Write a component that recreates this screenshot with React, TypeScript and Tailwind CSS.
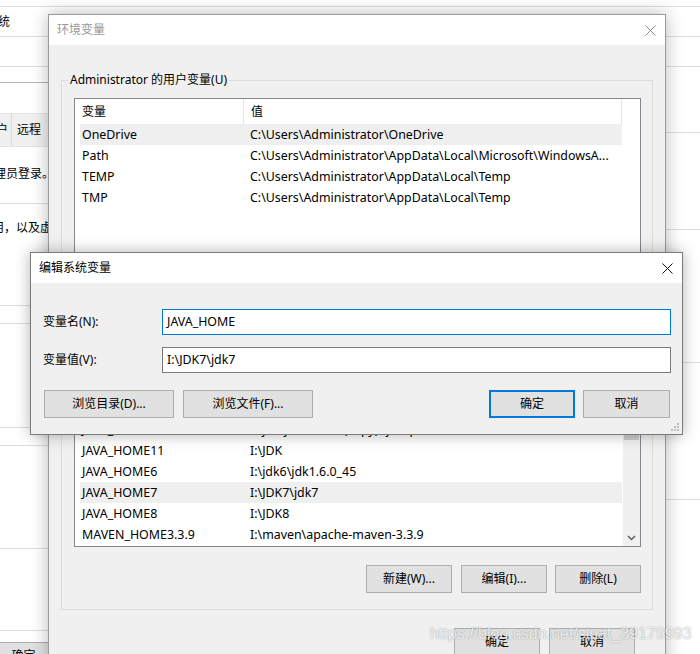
import React from "react";

const userRows: [string, string][] = [
  ["OneDrive", "C:\\Users\\Administrator\\OneDrive"],
  ["Path", "C:\\Users\\Administrator\\AppData\\Local\\Microsoft\\WindowsA..."],
  ["TEMP", "C:\\Users\\Administrator\\AppData\\Local\\Temp"],
  ["TMP", "C:\\Users\\Administrator\\AppData\\Local\\Temp"],
];

const sysRows: [string, string][] = [
  ["ComSpec", "C:\\Windows\\system32\\cmd.exe"],
  ["DriverData", "C:\\Windows\\System32\\Drivers\\DriverData"],
  ["JAVA_HOME", "%JAVA_HOME7%"],
  ["JAVA_HOME10", "I:\\jdk\\jdk-10.0.2 (copy) \\javapath"],
  ["JAVA_HOME11", "I:\\JDK"],
  ["JAVA_HOME6", "I:\\jdk6\\jdk1.6.0_45"],
  ["JAVA_HOME7", "I:\\JDK7\\jdk7"],
  ["JAVA_HOME8", "I:\\JDK8"],
  ["MAVEN_HOME3.3.9", "I:\\maven\\apache-maven-3.3.9"],
];

function CloseX({ dark }: { dark?: boolean }) {
  return (
    <svg width="11" height="11" viewBox="0 0 11 11" className="block">
      <path
        d="M0.5 0.5 L10.5 10.5 M10.5 0.5 L0.5 10.5"
        stroke={dark ? "#111111" : "#8a8a8a"}
        strokeWidth="1"
        fill="none"
      />
    </svg>
  );
}

function Btn({ children, className }: { children: React.ReactNode; className: string }) {
  return (
    <div
      className={`h-[28px] shrink-0 flex items-center justify-center bg-[#e1e1e1] border border-[#adadad] text-[12px] ${className}`}
    >
      {children}
    </div>
  );
}

function DefaultBtn({ children, className }: { children: React.ReactNode; className: string }) {
  return (
    <div
      className={`h-[28px] shrink-0 flex items-center justify-center bg-[#e1e1e1] border-2 border-[#0078d7] text-[12px] ${className}`}
    >
      {children}
    </div>
  );
}

function Scrollbar() {
  return (
    <div className="w-[17px] shrink-0 bg-[#f0f0f0] flex flex-col">
      <div className="h-[17px] flex items-center justify-center">
        <svg width="9" height="6" viewBox="0 0 9 6">
          <path d="M1 5 L4.5 1.5 L8 5" stroke="#606060" strokeWidth="1.5" fill="none" />
        </svg>
      </div>
      <div className="h-[92px] mx-[1px] bg-[#cdcdcd]" />
      <div className="flex-1" />
      <div className="h-[17px] flex items-center justify-center">
        <svg width="9" height="6" viewBox="0 0 9 6">
          <path d="M1 1 L4.5 4.5 L8 1" stroke="#606060" strokeWidth="1.5" fill="none" />
        </svg>
      </div>
    </div>
  );
}

function ListView({
  rows,
  selected,
  heightClass,
  scrollbar,
}: {
  rows: [string, string][];
  selected: number;
  heightClass: string;
  scrollbar?: boolean;
}) {
  return (
    <div className={`flex border border-[#828790] bg-white overflow-hidden ${heightClass}`}>
      <div className="flex-1 flex flex-col overflow-hidden">
        <div className="flex h-[25px] shrink-0">
          <div className="w-[169px] h-full border-r border-[#e5e5e5] pl-[7px] flex items-center">变量</div>
          <div className="w-[378px] h-full border-r border-[#e5e5e5] pl-[7px] flex items-center">值</div>
        </div>
        {rows.map((r, i) => (
          <div
            key={r[0]}
            className={`flex h-[21px] shrink-0 ml-[5px] w-[542px] items-center pt-[2px] text-[12.4px] ${i === selected ? "bg-[#efefef]" : ""}`}
          >
            <div className="w-[168px] pl-[2px] whitespace-nowrap overflow-hidden">{r[0]}</div>
            <div className="flex-1 pl-[2px] whitespace-nowrap overflow-hidden">{r[1]}</div>
          </div>
        ))}
      </div>
      {scrollbar ? <Scrollbar /> : null}
    </div>
  );
}

function EnvDialog() {
  return (
    <div className="absolute left-[48px] top-[14px] w-[618px] h-[660px] border border-[#9a9a9a] bg-[#f0f0f0] shadow-[0_0_16px_rgba(0,0,0,0.28)] flex flex-col">
      <div className="h-[30px] shrink-0 bg-white flex items-center justify-between pl-[8px] pr-[9px]">
        <span className="text-[#999999]">环境变量</span>
        <CloseX />
      </div>
      <div className="flex flex-col">
        <div className="relative mt-[35px] mx-[12px] h-[221px] border border-[#dcdcdc] pt-[17px] pl-[12px] pr-[11px]">
          <span className="absolute left-[6px] top-[-9px] bg-[#f0f0f0] px-[2px] leading-[16px] whitespace-nowrap">
            Administrator 的用户变量(U)
          </span>
          <ListView rows={userRows} selected={0} heightClass="h-[170px]" />
        </div>
        <div className="relative mt-[11px] mx-[12px] h-[298px] border border-[#dcdcdc] pt-[17px] pl-[12px] pr-[11px] flex flex-col">
          <span className="absolute left-[6px] top-[-9px] bg-[#f0f0f0] px-[2px] leading-[16px] whitespace-nowrap">
            系统变量(S)
          </span>
          <ListView rows={sysRows} selected={6} heightClass="h-[217px]" scrollbar />
          <div className="flex justify-end mt-[18px]">
            <Btn className="w-[86px]">新建(W)...</Btn>
            <Btn className="w-[86px] ml-[9px]">编辑(I)...</Btn>
            <Btn className="w-[86px] ml-[8px]">删除(L)</Btn>
          </div>
        </div>
        <div className="flex justify-end mt-[18px] pr-[30px]">
          <Btn className="w-[86px]">确定</Btn>
          <Btn className="w-[86px] ml-[9px]">取消</Btn>
        </div>
      </div>
    </div>
  );
}

function EditDialog() {
  return (
    <div className="absolute left-[30px] top-[252px] w-[653px] h-[183px] border border-[#7a7a7a] bg-[#f0f0f0] shadow-[0_0_14px_rgba(0,0,0,0.3)] flex flex-col">
      <div className="h-[30px] shrink-0 bg-white flex items-center justify-between pl-[8px] pr-[9px]">
        <span className="text-black">编辑系统变量</span>
        <CloseX dark />
      </div>
      <div className="flex flex-col pl-[12px] pr-[11px] pt-[26px]">
        <div className="flex items-center h-[26px]">
          <span className="w-[119px] shrink-0">变量名(N):</span>
          <div className="flex-1 h-[26px] border border-[#0078d7] bg-white pl-[4px] flex items-center text-[12.4px]">JAVA_HOME</div>
        </div>
        <div className="flex items-center h-[26px] mt-[12px]">
          <span className="w-[119px] shrink-0">变量值(V):</span>
          <div className="flex-1 h-[26px] border border-[#7a7a7a] bg-white pl-[4px] flex items-center text-[12.4px]">I:\JDK7\jdk7</div>
        </div>
        <div className="flex items-center mt-[17px]">
          <Btn className="w-[130px] ml-[1px]">浏览目录(D)...</Btn>
          <Btn className="w-[130px] ml-[9px]">浏览文件(F)...</Btn>
          <div className="flex-1" />
          <DefaultBtn className="w-[86px]">确定</DefaultBtn>
          <Btn className="w-[87px] ml-[8px] mr-[1px]">取消</Btn>
        </div>
      </div>
      <svg width="10" height="9" viewBox="0 0 10 9" className="absolute right-[2px] bottom-[2px]">
        <rect x="7" y="0" width="2" height="2" fill="#bdbdbd" />
        <rect x="4" y="3" width="2" height="2" fill="#bdbdbd" />
        <rect x="7" y="3" width="2" height="2" fill="#bdbdbd" />
        <rect x="1" y="6" width="2" height="2" fill="#bdbdbd" />
        <rect x="4" y="6" width="2" height="2" fill="#bdbdbd" />
        <rect x="7" y="6" width="2" height="2" fill="#bdbdbd" />
      </svg>
    </div>
  );
}

function LeftStrip() {
  return (
    <div className="absolute left-0 top-[7px] w-[48px] h-[647px] overflow-hidden flex flex-col">
      <div className="h-[30px] shrink-0 border-b border-[#dedede] flex items-center">
        <span className="ml-[-14px] whitespace-nowrap">系统</span>
      </div>
      <div className="h-[30px] shrink-0 border-b border-[#dedede]" />
      <div className="h-[16px] shrink-0 border-b border-[#b4b4b4]" />
      <div className="h-[30px] shrink-0" />
      <div className="h-[34px] shrink-0 bg-[#f0f0f0] border-y border-[#e3e3e3] flex items-center">
        <span className="ml-[-4px] pr-[3px] h-full flex items-center border-r border-[#dadada] whitespace-nowrap">户</span>
        <span className="pl-[5px] whitespace-nowrap">远程</span>
      </div>
      <div className="h-[57px] shrink-0 border-b border-[#dedede] pt-[19px]">
        <span className="block ml-[-18px] leading-[16px] whitespace-nowrap">管理员登录。</span>
      </div>
      <div className="h-[102px] shrink-0 border-b border-[#dedede] pt-[16px]">
        <span className="block ml-[-8px] leading-[16px] whitespace-nowrap">用，以及虚拟</span>
      </div>
      <div className="h-[18px] shrink-0 border-b border-[#dedede]" />
      <div className="h-[104px] shrink-0 border-b border-[#dedede]" />
      <div className="h-[18px] shrink-0 border-b border-[#dedede]" />
      <div className="h-[103px] shrink-0 border-b border-[#dedede]" />
      <div className="h-[82px] shrink-0 border-b border-[#dedede]" />
      <div className="h-[11px] shrink-0" />
      <div className="h-[28px] w-[81px] ml-[-17px] shrink-0 bg-[#e1e1e1] border border-[#adadad] flex items-center justify-center">
        确定
      </div>
    </div>
  );
}

function RightStrip() {
  return (
    <div className="absolute left-[666px] top-[7px] w-[34px] h-[647px] flex flex-col">
      <div className="h-[30px] shrink-0 border-b border-[#dedede]" />
      <div className="h-[30px] shrink-0 border-b border-[#dedede]" />
      <div className="h-[66px] shrink-0 border-b border-[#dedede]" />
      <div className="h-[97px] shrink-0 border-b border-[#dedede]" />
      <div className="h-[133px] shrink-0 border-b border-[#dedede]" />
      <div className="h-[137px] shrink-0 border-b border-[#dedede]" />
    </div>
  );
}

export default function App() {
  return (
    <div className="relative w-[700px] h-[654px] overflow-hidden bg-white text-black text-[12px] font-['Noto_Sans','Noto_Sans_CJK_SC',sans-serif]">
      <div className="h-[7px] border-b border-[#dedede]" />
      <LeftStrip />
      <RightStrip />
      <EnvDialog />
      <EditDialog />
      <div className="absolute left-[430px] top-[624px] whitespace-nowrap text-[16px] leading-[20px] font-['Liberation_Sans',sans-serif] text-[rgba(255,255,255,0.8)] [text-shadow:0_0_1.5px_rgba(0,0,0,0.4)]">
        https://blog.csdn.net/sinat_39179993
      </div>
    </div>
  );
}
